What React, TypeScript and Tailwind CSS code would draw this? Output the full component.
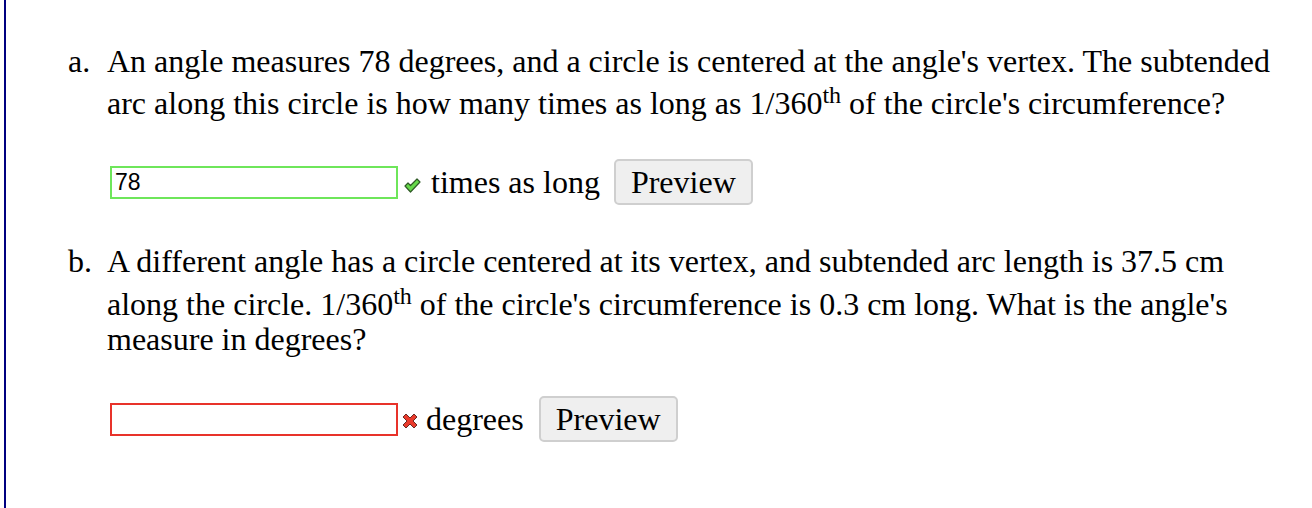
import type { ReactNode } from 'react';

const serif = 'font-["Liberation_Serif","Times_New_Roman",serif]';

const CheckMark = () => (
    <svg width="17" height="16" viewBox="0 0 17 16" className="mt-[7px] mr-[10px] ml-[6px] shrink-0">
        <path
            d="M1 8 L4 5 L6.5 7.5 L13 1 L16 4 L6.5 14 Z"
            fill="#66d94a"
            stroke="#2f5a26"
            strokeWidth="1.2"
            strokeLinejoin="round"
        />
    </svg>
);

const CrossMark = () => (
    <svg width="16" height="16" viewBox="0 0 16 16" className="mt-[4px] mr-[8px] ml-[4px] shrink-0">
        <path
            d="M1 4 L4 1 L8 5 L12 1 L15 4 L11 8 L15 12 L12 15 L8 11 L4 15 L1 12 L5 8 Z"
            fill="#ea3a2c"
            stroke="#6b2a24"
            strokeWidth="1"
            strokeLinejoin="round"
        />
    </svg>
);

const PreviewButton = () => (
    <button
        type="button"
        className={`${serif} h-[46px] rounded-[5px] border-2 border-[#cfcfcf] bg-[#efefef] px-[15px] text-[32px] leading-none text-black`}
    >
        Preview
    </button>
);

// raised "th" ordinal
const Sup = ({ children }: { children: ReactNode }) => (
    <span className="relative top-[-11px] text-[24px] leading-none">{children}</span>
);

type AnswerProps = {
    value: string;
    correct: boolean;
    unit: string;
    unitGap: string;
};

const AnswerRow = ({ value, correct, unit, unitGap }: AnswerProps) => (
    <div className="flex h-[46px] items-center pl-[3px]">
        <input
            readOnly
            value={value}
            className={`h-[33px] w-[288px] border-2 bg-white px-[3px] font-["Liberation_Sans",Arial,sans-serif] text-[23px] text-black outline-none ${
                correct ? 'border-[#6ee65a]' : 'border-[#e8322a]'
            }`}
        />
        {correct ? <CheckMark /> : <CrossMark />}
        <span className={`${unitGap} text-[32px]`}>{unit}</span>
        <PreviewButton />
    </div>
);

const Item = ({ label, className, children }: { label: string; className?: string; children: ReactNode }) => (
    <li className={`flex ${className ?? ''}`}>
        <span className="w-[39px] shrink-0">{label}</span>
        <div className="flex-1">{children}</div>
    </li>
);

export default function App() {
    return (
        <div className="flex h-[508px] w-full bg-white text-black">
            <div className="ml-[4px] w-[2px] bg-[#000080]" />
            <ol className={`${serif} w-[1286px] pt-[44px] pl-[62px] text-[32px] leading-[35px]`}>
                <Item label="a.">
                    <p>
                        An angle measures 78 degrees, and a circle is centered at the angle's vertex. The subtended
                        <span className="mt-[7px] block">
                            arc along this circle is how many times as long as 1/360<Sup>th</Sup> of the circle's
                            circumference?
                        </span>
                    </p>
                    <div className="mt-[38px]">
                        <AnswerRow value="78" correct unit="times as long" unitGap="mr-[14px]" />
                    </div>
                </Item>
                <Item label="b." className="mt-[39px]">
                    <p>
                        A different angle has a circle centered at its vertex, and subtended arc length is 37.5 cm
                        <span className="mt-[8px] block">
                            along the circle. 1/360<Sup>th</Sup> of the circle's circumference is 0.3 cm long. What is the angle's
                            measure in degrees?
                        </span>
                    </p>
                    <div className="mt-[39px]">
                        <AnswerRow value="" correct={false} unit="degrees" unitGap="mr-[15px]" />
                    </div>
                </Item>
            </ol>
        </div>
    );
}
